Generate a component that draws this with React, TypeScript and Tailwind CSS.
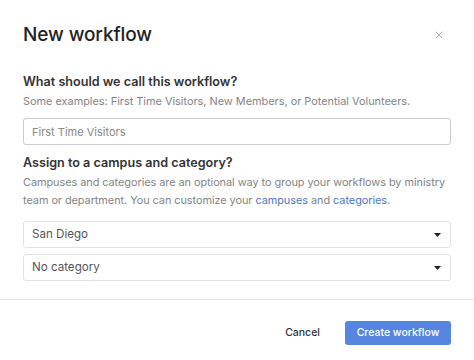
import { X } from "lucide-react";

// Select-looking box with a small filled caret on the right.
function FakeSelect({ value }: { value: string }) {
  return (
    <div className="flex h-[27px] items-center justify-between rounded-[3px] border border-[#e2e2e2] bg-white pl-[8px] pr-[9px] text-[11.6px] text-[#555]">
      <span>{value}</span>
      <svg width="7" height="4" viewBox="0 0 7 4" className="text-[#222]">
        <path d="M0 0h7L3.5 4z" fill="currentColor" />
      </svg>
    </div>
  );
}

export default function App() {
  return (
    <div
      className="h-[360px] w-[474px] overflow-hidden bg-white pt-[23px]"
      style={{ fontFamily: "Inter, 'Noto Sans', sans-serif" }}
    >
      <div className="flex h-[24px] items-center justify-between px-[23px]">
        <h1 className="text-[19px] leading-[24px] font-medium tracking-[-0.1px] text-[#222]">
          New workflow
        </h1>
        <X className="mr-[6px] h-[12px] w-[12px] text-[#999]" strokeWidth={1.6} />
      </div>

      <div className="px-[23px] pt-[27px]">
        <div className="text-[12.6px] leading-[16px] font-semibold text-[#333]">
          What should we call this workflow?
        </div>
        <div className="mt-[3px] text-[10.9px] leading-[16px] text-[#848484]">
          Some examples: First Time Visitors, New Members, or Potential Volunteers.
        </div>
        <input
          className="mt-[9px] h-[27px] w-full rounded-[3px] border border-[#c9c9cf] px-[8px] text-[11px] text-[#333] placeholder:text-[#888] outline-none"
          placeholder="First Time Visitors"
        />

        <div className="mt-[10px] text-[12.6px] leading-[16px] font-semibold text-[#333]">
          Assign to a campus and category?
        </div>
        <div className="mt-[2px] text-[10.9px] leading-[18px] tracking-[-0.05px] text-[#848484]">
          Campuses and categories are an optional way to group your workflows by ministry
          team or department. You can customize your{" "}
          <span className="text-[#4a78c6]">campuses</span> and{" "}
          <span className="text-[#4a78c6]">categories</span>.
        </div>

        <div className="mt-[12px] flex flex-col gap-[6px]">
          <FakeSelect value="San Diego" />
          <FakeSelect value="No category" />
        </div>
      </div>

      <div className="mt-[18px] border-t border-[#e5e5e5]" />

      <div className="flex items-center justify-end gap-[25px] px-[23px] pt-[21px]">
        <button className="text-[10.5px] font-medium text-[#333]">Cancel</button>
        <button className="h-[24px] w-[106px] rounded-[3px] bg-[#5786e0] text-[10.5px] font-medium text-white">
          Create workflow
        </button>
      </div>
    </div>
  );
}
